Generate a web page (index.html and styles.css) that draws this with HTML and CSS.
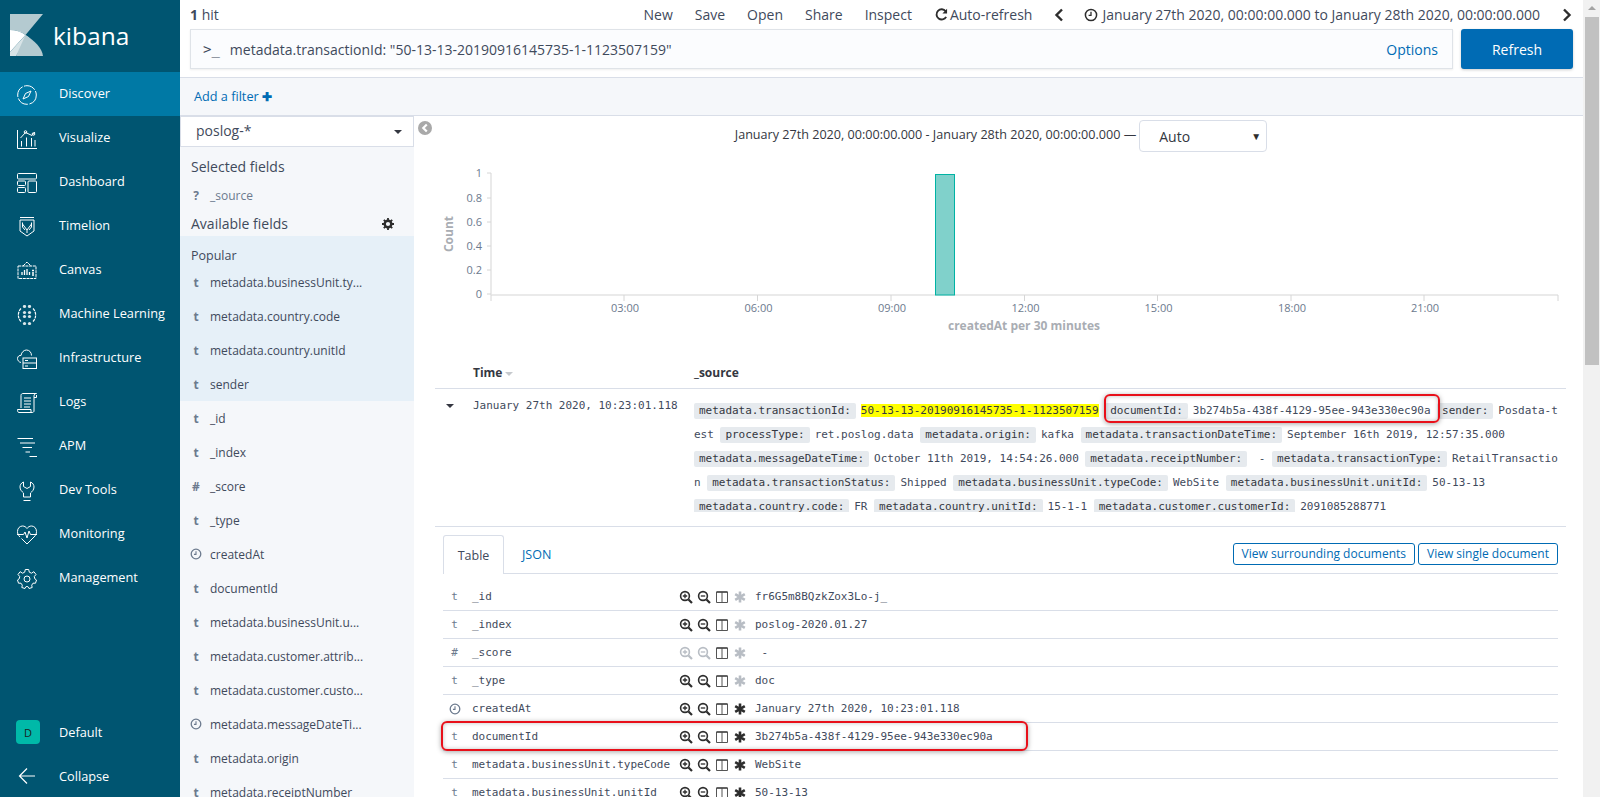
FILE: index.html
```html
<!DOCTYPE html>
<html lang="en">
<head>
<meta charset="utf-8">
<title>Discover - Kibana</title>
<link rel="stylesheet" href="styles.css">
</head>
<body>
<svg class="defs" width="0" height="0" aria-hidden="true">
  <symbol id="zin" viewBox="0 0 14 14"><circle cx="6" cy="6" r="4.4" fill="none" stroke="currentColor" stroke-width="1.6"/><path d="M9.5 9.5L13 13" stroke="currentColor" stroke-width="2.2"/><path d="M3.8 6h4.4M6 3.8v4.4" stroke="currentColor" stroke-width="1.3"/></symbol>
  <symbol id="zout" viewBox="0 0 14 14"><circle cx="6" cy="6" r="4.4" fill="none" stroke="currentColor" stroke-width="1.6"/><path d="M9.5 9.5L13 13" stroke="currentColor" stroke-width="2.2"/><path d="M3.8 6h4.4" stroke="currentColor" stroke-width="1.3"/></symbol>
  <symbol id="cols" viewBox="0 0 14 14"><path d="M1.5 2h11v10.5h-11zM7 2v10.5" fill="none" stroke="#555" stroke-width="1"/><path d="M1.5 2h11" stroke="#444" stroke-width="1.4"/></symbol>
  <symbol id="star" viewBox="0 0 14 14"><path d="M7 1.5v11M2.2 4.2l9.6 5.6M11.8 4.2L2.2 9.8" stroke="currentColor" stroke-width="2.6"/></symbol>
  <symbol id="clock" viewBox="0 0 14 14"><circle cx="7" cy="7" r="5.6" fill="none" stroke="currentColor" stroke-width="1.5"/><path d="M7 3.8V7.4H4.6" fill="none" stroke="currentColor" stroke-width="1.3"/></symbol>
</svg>
<div class="app">
  <aside class="nav">
    <div class="brand">
      <svg class="logo" viewBox="0 0 33 42" width="33" height="42"><path d="M0 0H33L15.500 21C11 17.800 6 16 0 16Z" fill="#b4cad0"/><path d="M0 16C6 16 11 17.800 15.500 21L0 38Z" fill="#fff"/><path d="M15.500 21L19 23.500L6 42H0V38Z" fill="#d8e4e7"/><path d="M15.500 21C25 27 32 34 33 42H6Z" fill="#b4cad0"/></svg>
      <span class="brand-name">kibana</span>
    </div>
    <a class="nav-item active"><svg class="ni" viewBox="0 0 20 20"><circle cx="10" cy="10" r="9.300" stroke-dasharray="12 1.500"/><path d="M14 6L11.500 11.500L6 14L8.500 8.500Z"/></svg><span>Discover</span></a>
    <a class="nav-item"><svg class="ni" viewBox="0 0 20 20"><path d="M.5 1V19.500H20M3.500 9L8.500 3.500L15 6.500L18 3"/><circle cx="8.500" cy="3" r="1.300"/><circle cx="16.500" cy="5" r="1.300"/><path d="M4.500 17.500V12M9.500 17.500V8.500M14.500 17.500V9M18 17.500V11"/></svg><span>Visualize</span></a>
    <a class="nav-item"><svg class="ni" viewBox="0 0 20 20"><rect x=".5" y=".5" width="19" height="5.500" rx="1"/><rect x=".5" y="8" width="8" height="4.500" rx="1"/><rect x=".5" y="14.500" width="8" height="5" rx="1"/><rect x="11" y="8" width="8.500" height="11.500" rx="1"/></svg><span>Dashboard</span></a>
    <a class="nav-item"><svg class="ni" viewBox="0 0 20 20"><path d="M3 .5H17M3 3H17V14L10 19L3 14ZM5.500 7L10 13L14.500 7M10 13V16M5.500 5.500V10L8 13M14.500 5.500V10L12 13"/></svg><span>Timelion</span></a>
    <a class="nav-item"><svg class="ni" viewBox="0 0 20 20"><path d="M6 5L10 1L14 5M1 5H19V17.500H1Z" stroke-dasharray="3 .7"/><path d="M5 14V11M7.500 14V9M10 14V8M12.500 14V11M15 9.500H17M15 12H17M15 14H17" stroke-width="1.300"/></svg><span>Canvas</span></a>
    <a class="nav-item"><svg class="ni" viewBox="0 0 20 20"><path d="M4 3.500C.5 7 .5 13 4 16.500M16 3.500C19.500 7 19.500 13 16 16.500" stroke-dasharray="3 .8" stroke-width="1.200"/><g class="solid"><circle cx="7.500" cy="1.500" r="1.600"/><circle cx="12.500" cy="1.500" r="1.600"/><circle cx="7.500" cy="7.500" r="1.600"/><circle cx="12.500" cy="7.500" r="1.600"/><circle cx="7.500" cy="11.500" r="1.600"/><circle cx="12.500" cy="11.500" r="1.600"/><circle cx="7.500" cy="18.500" r="1.600"/><circle cx="12.500" cy="18.500" r="1.600"/></g></svg><span>Machine Learning</span></a>
    <a class="nav-item"><svg class="ni" viewBox="0 0 20 20"><path d="M4 13.500C1.500 13 .5 11 .5 9.500C.5 7 3 6 4 6.500C4.500 3 7 1 9.500 1C12.500 1 14.500 3.500 14.500 6.500"/><rect x="6" y="9" width="13.500" height="10.500"/><path d="M6 14H19.500M8 11.500H11M8 17H11"/></svg><span>Infrastructure</span></a>
    <a class="nav-item"><svg class="ni" viewBox="0 0 20 20"><path d="M4 15V2.500C4 1 5 .5 6 .5H19.500C18 .5 17 1.500 17 3V18C17 19 16 19.500 15 19.500H2C.5 19.500.5 17.500.5 16.500H14V19"/><path d="M17 4.500H19.500V2M7 5H14M7 8H14M7 11H14M7 14H13" /></svg><span>Logs</span></a>
    <a class="nav-item"><svg class="ni" viewBox="0 0 20 20"><path d="M.5 1.500H16M3 6H18M5.500 10.500H15M8.500 15H13M12.500 19.500H20"/></svg><span>APM</span></a>
    <a class="nav-item"><svg class="ni" viewBox="0 0 20 20"><path d="M6.500 1C4 2 3 4 3 6C3 9 5 10.500 6.500 12V16H13.500V12C15 10.500 17 9 17 6C17 4 16 2 13.500 1V5.500L10 7.500L6.500 5.500ZM6.500 19.500H13.500"/></svg><span>Dev Tools</span></a>
    <a class="nav-item"><svg class="ni" viewBox="0 0 20 20"><path d="M3 12C1 10 .5 8.500 .5 6.500C.5 3 3 1 5.500 1C7.500 1 9 2 10 3.500C11 2 12.500 1 14.500 1C17 1 19.500 3 19.500 6.500C19.500 8.500 19 10 17 12L10 19L4.500 13.500"/><path d="M0 9.500H6.500L8 7L10 13L12 6L13.500 9.500H20"/></svg><span>Monitoring</span></a>
    <a class="nav-item"><svg class="ni" viewBox="0 0 20 20"><circle cx="10" cy="10" r="3"/><path d="M8.300 .5H11.700L12.300 3.200L14.500 4.200L16.900 2.700L19 5.500L17.300 7.500L17.800 9.800L19.500 11L18.500 14.200L16 14.200L14.700 16.200L15.200 18.500L12 19.500L10.800 17.500H9.200L8 19.500L4.800 18.500L5.300 16.200L4 14.200L1.500 14.200L.5 11L2.200 9.800L2.700 7.500L1 5.500L3.100 2.700L5.500 4.200L7.700 3.200Z"/></svg><span>Management</span></a>
    <div class="nav-bottom">
      <a class="nav-item space"><span class="avatar">D</span><span>Default</span></a>
      <a class="nav-item"><svg class="ni" viewBox="0 0 20 20"><path d="M3 10H18M10 2.500L2.500 10L10 17.500" stroke-width="1.200"/></svg><span>Collapse</span></a>
    </div>
  </aside>

  <main class="main">
    <header class="top">
      <div class="menu-row">
        <div class="hits"><b>1</b> hit</div>
        <nav class="menu">
          <a>New</a><a>Save</a><a>Open</a><a>Share</a><a>Inspect</a>
          <a class="refresh"><svg viewBox="0 0 14 14" width="13" height="13"><path d="M11.500 3.500A5.500 5.500 0 1 0 12 9.500" fill="none" stroke="currentColor" stroke-width="2"/><path d="M13 .8V6H8Z" fill="currentColor"/></svg>Auto-refresh</a>
          <a class="chev"><svg viewBox="0 0 10 14" width="10" height="14"><path d="M8 1.500L2.500 7L8 12.500" fill="none" stroke="currentColor" stroke-width="2.400"/></svg></a>
          <a class="range"><svg width="14" height="14"><use href="#clock"/></svg>January 27th 2020, 00:00:00.000 to January 28th 2020, 00:00:00.000</a>
          <a class="chev"><svg viewBox="0 0 10 14" width="10" height="14"><path d="M2 1.500L7.500 7L2 12.500" fill="none" stroke="currentColor" stroke-width="2.400"/></svg></a>
        </nav>
      </div>
      <div class="query-row">
        <div class="query"><span class="prompt">&gt;_</span><span class="qtext">metadata.transactionId: "50-13-13-20190916145735-1-1123507159"</span><a class="options">Options</a></div>
        <button class="refresh-btn">Refresh</button>
      </div>
    </header>
    <div class="filter-bar"><a class="add-filter">Add a filter <b>✚</b></a></div>
    <div class="content">
      <section class="fields">
        <div class="pattern"><span>poslog-*</span><i class="caret"></i></div>
        <h3 class="fhead">Selected fields</h3>
        <div class="field selected"><em>?</em><span>_source</span></div>
        <h3 class="fhead avail">Available fields <svg viewBox="0 0 12 12" width="12" height="12"><circle cx="6" cy="6" r="3.300" fill="none" stroke="#2d2d2d" stroke-width="2.400"/><path d="M6 0v2.500M6 9.500V12M0 6h2.500M9.500 6H12M1.800 1.800l1.800 1.800M8.400 8.400l1.800 1.800M1.800 10.200l1.800-1.800M8.400 3.600l1.800-1.800" stroke="#2d2d2d" stroke-width="1.800"/></svg></h3>
        <div class="popular">
          <div class="pop-title">Popular</div>
          <div class="field"><em>t</em><span>metadata.businessUnit.ty...</span></div>
          <div class="field"><em>t</em><span>metadata.country.code</span></div>
          <div class="field"><em>t</em><span>metadata.country.unitId</span></div>
          <div class="field"><em>t</em><span>sender</span></div>
        </div>
        <div class="field"><em>t</em><span>_id</span></div>
        <div class="field"><em>t</em><span>_index</span></div>
        <div class="field"><em>#</em><span>_score</span></div>
        <div class="field"><em>t</em><span>_type</span></div>
        <div class="field"><em><svg width="12" height="12"><use href="#clock"/></svg></em><span>createdAt</span></div>
        <div class="field"><em>t</em><span>documentId</span></div>
        <div class="field"><em>t</em><span>metadata.businessUnit.u...</span></div>
        <div class="field"><em>t</em><span>metadata.customer.attrib...</span></div>
        <div class="field"><em>t</em><span>metadata.customer.custo...</span></div>
        <div class="field"><em><svg width="12" height="12"><use href="#clock"/></svg></em><span>metadata.messageDateTi...</span></div>
        <div class="field"><em>t</em><span>metadata.origin</span></div>
        <div class="field"><em>t</em><span>metadata.receiptNumber</span></div>
      </section>
      <i class="collapse-btn"><svg viewBox="0 0 14 14" width="14" height="14"><circle cx="7" cy="7" r="7" fill="#a9a9a9"/><path d="M8.800 3.500L5.300 7L8.800 10.500" fill="none" stroke="#fff" stroke-width="2.200"/></svg></i>

      <section class="results">
        <div class="timespan"><span>January 27th 2020, 00:00:00.000 - January 28th 2020, 00:00:00.000 —</span><div class="interval">Auto<i class="tri">▼</i></div></div>
        <svg class="chart" viewBox="414 160 1169 190" width="1169" height="190">
          <path class="axis" d="M491 173V295M491 295H1558"/>
          <path class="tick" d="M487 173h4M487 198h4M487 222h4M487 246h4M487 270h4M487 294h4M491 295v6M624 295v6M757.500 295v6M891 295v6M1024.500 295v6M1157.500 295v6M1291 295v6M1424 295v6M1558 295v6"/>
          <rect x="935.500" y="174.500" width="19" height="120.500" fill="#80d1cb" stroke="#00b3a4"/>
          <g class="ylab"><text x="482" y="177">1</text><text x="482" y="202">0.8</text><text x="482" y="226">0.6</text><text x="482" y="250">0.4</text><text x="482" y="274">0.2</text><text x="482" y="298">0</text></g>
          <g class="xlab"><text x="625" y="312">03:00</text><text x="758.500" y="312">06:00</text><text x="892" y="312">09:00</text><text x="1025.500" y="312">12:00</text><text x="1158.500" y="312">15:00</text><text x="1292" y="312">18:00</text><text x="1425" y="312">21:00</text></g>
          <text class="atitle" x="1024" y="330">createdAt per 30 minutes</text>
          <text class="atitle" transform="translate(453 234) rotate(-90)">Count</text>
        </svg>
        <div class="doc-table">
          <div class="thead"><b class="th-time">Time<i class="sort"></i></b><b class="th-src">_source</b></div>
          <div class="drow">
            <i class="caret dark"></i>
            <div class="dtime">January 27th 2020, 10:23:01.118</div>
            <div class="source"><b>metadata.transactionId:</b><span><mark>50-13-13-20190916145735-1-1123507159</mark></span><b>documentId:</b><span>3b274b5a-438f-4129-95ee-943e330ec90a</span><b>sender:</b><span>Posdata-test</span><b>processType:</b><span>ret.poslog.data</span><b>metadata.origin:</b><span>kafka</span><b>metadata.transactionDateTime:</b><span>September 16th 2019, 12:57:35.000</span><b>metadata.messageDateTime:</b><span>October 11th 2019, 14:54:26.000</span><b>metadata.receiptNumber:</b><span>&nbsp;-</span><b>metadata.transactionType:</b><span>RetailTransaction</span><b>metadata.transactionStatus:</b><span>Shipped</span><b>metadata.businessUnit.typeCode:</b><span>WebSite</span><b>metadata.businessUnit.unitId:</b><span>50-13-13</span><b>metadata.country.code:</b><span>FR</span><b>metadata.country.unitId:</b><span>15-1-1</span><b>metadata.customer.customerId:</b><span>2091085288771</span></div>
          </div>
          <div class="detail">
            <div class="tabs">
              <a class="tab on">Table</a><a class="tab">JSON</a>
              <div class="views"><a>View surrounding documents</a><a>View single document</a></div>
            </div>
            <div class="kv-list">
              <div class="kv"><em>t</em><span class="k">_id</span><span class="acts"><svg><use href="#zin"/></svg><svg><use href="#zout"/></svg><svg><use href="#cols"/></svg><svg class="off"><use href="#star"/></svg></span><span>fr6G5m8BQzkZox3Lo-j_</span></div>
              <div class="kv"><em>t</em><span class="k">_index</span><span class="acts"><svg><use href="#zin"/></svg><svg><use href="#zout"/></svg><svg><use href="#cols"/></svg><svg class="off"><use href="#star"/></svg></span><span>poslog-2020.01.27</span></div>
              <div class="kv"><em>#</em><span class="k">_score</span><span class="acts"><svg class="off"><use href="#zin"/></svg><svg class="off"><use href="#zout"/></svg><svg><use href="#cols"/></svg><svg class="off"><use href="#star"/></svg></span><span>&nbsp;-</span></div>
              <div class="kv"><em>t</em><span class="k">_type</span><span class="acts"><svg><use href="#zin"/></svg><svg><use href="#zout"/></svg><svg><use href="#cols"/></svg><svg class="off"><use href="#star"/></svg></span><span>doc</span></div>
              <div class="kv"><em><svg width="12" height="12"><use href="#clock"/></svg></em><span class="k">createdAt</span><span class="acts"><svg><use href="#zin"/></svg><svg><use href="#zout"/></svg><svg><use href="#cols"/></svg><svg><use href="#star"/></svg></span><span>January 27th 2020, 10:23:01.118</span></div>
              <div class="kv"><em>t</em><span class="k">documentId</span><span class="acts"><svg><use href="#zin"/></svg><svg><use href="#zout"/></svg><svg><use href="#cols"/></svg><svg><use href="#star"/></svg></span><span>3b274b5a-438f-4129-95ee-943e330ec90a</span></div>
              <div class="kv"><em>t</em><span class="k">metadata.businessUnit.typeCode</span><span class="acts"><svg><use href="#zin"/></svg><svg><use href="#zout"/></svg><svg><use href="#cols"/></svg><svg><use href="#star"/></svg></span><span>WebSite</span></div>
              <div class="kv"><em>t</em><span class="k">metadata.businessUnit.unitId</span><span class="acts"><svg><use href="#zin"/></svg><svg><use href="#zout"/></svg><svg><use href="#cols"/></svg><svg><use href="#star"/></svg></span><span>50-13-13</span></div>
            </div>
          </div>
        </div>
      </section>
    </div>
  </main>
  <div class="scrollbar"><i class="up"></i><i class="thumb"></i></div>
  <div class="redbox box-a"></div>
  <div class="redbox box-b"></div>
</div>
</body>
</html>
```
FILE: styles.css
```css
* { box-sizing: border-box; }
html, body { margin: 0; height: 797px; overflow: hidden; }
body { font-family: "Open Sans", "Liberation Sans", sans-serif; font-size: 13px; color: #3f4a5c; background: #fff; }
a { color: inherit; text-decoration: none; }
.defs { position: absolute; }
.app { position: relative; display: flex; width: 1600px; height: 798px; overflow: hidden; }

/* left navigation */
.nav { width: 180px; flex: none; display: flex; flex-direction: column; background: #005571; color: #fff; }
.brand { height: 72px; display: flex; align-items: flex-start; padding: 14px 0 0 10px; }
.brand-name { font-size: 24.500px; line-height: 44px; margin-left: 10px; }
.nav-item { height: 44px; flex: none; display: flex; align-items: center; padding-left: 17px; gap: 22px; font-size: 12.750px; }
.nav-item > span:last-child { padding-bottom: 2px; }
.nav-item > .ni { margin-top: 2px; }
.nav-item.active { background: #0079a5; }
.ni { width: 20px; height: 20px; flex: none; fill: none; stroke: #fff; stroke-width: 1; }
.ni .solid { fill: #dbe7ea; stroke: none; }
.nav-bottom { margin-top: auto; }
.nav-bottom .nav-item > span:last-child { padding-bottom: 0; }
.nav-bottom .nav-item > .ni { margin-top: 0; }
.nav-item.space { padding-left: 16px; gap: 19px; }
.avatar { width: 24px; height: 24px; flex: none; border-radius: 4px; background: #00b9a8; color: #1a1c21; font-size: 11px; display: flex; align-items: center; justify-content: center; }

/* main column */
.main { width: 1403px; flex: none; display: flex; flex-direction: column; }
.top { height: 78px; border-bottom: 1px solid #d9dee8; padding: 0 10px; }
.menu-row { height: 29px; display: flex; align-items: center; justify-content: space-between; font-size: 14px; }
.hits b { font-weight: 700; }
.menu { display: flex; align-items: center; gap: 22px; margin-right: 1px; color: #3f4a5c; }
.refresh { display: flex; align-items: center; gap: 2px; margin-left: 1px; }
.refresh svg { color: #2d2d2d; }
.range { display: flex; align-items: center; gap: 4px; margin-left: -2px; }
.range svg { color: #2d2d2d; }
.chev { display: flex; color: #2d2d2d; }
.query-row { display: flex; gap: 8px; height: 40px; }
.query { flex: 1; display: flex; align-items: center; background: #fbfcfe; border: 1px solid #dfe3e8; box-shadow: 0 1px 2px rgba(0,0,0,.07); padding: 0 14px 0 12px; font-size: 14px; }
.prompt { font-family: "DejaVu Sans Mono", monospace; font-size: 14px; margin-right: 10px; }
.qtext { flex: 1; }
.options { color: #006bb4; font-size: 14px; }
.refresh-btn { width: 112px; border: 0; border-radius: 3px; background: #006bb4; color: #fff; font: 14px "Open Sans", sans-serif; box-shadow: 0 1px 3px rgba(0,0,0,.2); }
.filter-bar { height: 38px; background: #f5f7fa; border-bottom: 1px solid #d9dee8; display: flex; align-items: center; padding: 0 0 2px 14px; color: #006bb4; font-size: 12.700px; }
.add-filter b { font-size: 12px; }
.content { position: relative; flex: 1; display: flex; min-height: 0; }

/* field list */
.fields { width: 234px; flex: none; background: #f5f7fa; overflow: hidden; }
.pattern { height: 31px; background: #fff; border: 1px solid #d9dee8; display: flex; align-items: center; justify-content: space-between; padding: 0 11px 0 15px; font-size: 14px; }
.pattern span { padding-bottom: 2px; }
.caret { width: 0; height: 0; border: 4px solid transparent; border-top: 4.500px solid #343741; border-bottom: 0; }
.fhead { margin: 0; padding: 5px 0 0 11px; font-size: 14px; font-weight: 400; line-height: 29px; height: 40px; }
.avail { display: flex; align-items: center; justify-content: space-between; height: 25px; line-height: 25px; margin-top: 6px; padding: 0 20px 0 11px; }
.field { height: 34px; display: flex; align-items: center; padding-left: 5px; font-size: 12px; }
.field em { width: 22px; margin-right: 3px; flex: none; font-style: normal; font-weight: 700; color: #6c7a8e; font-size: 12px; display: flex; justify-content: center; }
.field.selected { height: 18px; padding-bottom: 2px; color: #6c7a8e; }
.popular { background: #e6f0f8; height: 165px; overflow: hidden; }
.pop-title { height: 29px; padding: 10px 0 0 11px; line-height: 20px; font-size: 12.500px; }
.collapse-btn { position: absolute; left: 238px; top: 5px; display: flex; }

/* results */
.results { flex: 1; min-width: 0; overflow: hidden; }
.timespan { height: 44px; padding: 4px 0 0 5px; display: flex; justify-content: center; align-items: flex-start; gap: 3px; font-size: 12.600px; color: #343741; }
.timespan span { line-height: 30px; }
.interval { position: relative; width: 128px; height: 32px; border: 1px solid #d9dee8; border-radius: 4px; padding-left: 19px; line-height: 32px; font-size: 14px; }
.tri { position: absolute; right: 5px; top: -1px; font-style: normal; font-size: 10px; color: #2d2d2d; }
.chart { display: block; }
.axis { fill: none; stroke: #e4e4e4; stroke-width: 1.500; }
.tick { fill: none; stroke: #d6d6d6; }
.ylab text { font-size: 11px; text-anchor: end; fill: #6c7a8e; }
.xlab text { font-size: 11px; text-anchor: middle; fill: #6c7a8e; }
.atitle { font-size: 12px; font-weight: 700; text-anchor: middle; fill: #a9adb3; }
.doc-table { margin: 0 17px 0 21px; font-family: "DejaVu Sans Mono", "Liberation Mono", monospace; font-size: 11px; letter-spacing: -.02px; color: #3f4a5c; }
.thead { height: 39px; padding-top: 6px; display: flex; align-items: center; border-bottom: 1px solid #d9dee8; font-family: "Open Sans", sans-serif; font-size: 12px; color: #343741; }
.th-time { width: 221px; margin-left: 38px; display: flex; align-items: center; gap: 3px; }
.sort { width: 0; height: 0; border: 4px solid transparent; border-top: 4px solid #c6c9cd; border-bottom: 0; margin-top: 3px; }
.drow { position: relative; height: 138px; padding: 8px 0 0 38px; display: flex; border-bottom: 1px solid #d9dee8; }
.caret.dark { position: absolute; left: 11px; top: 15px; }
.dtime { width: 221px; flex: none; line-height: 18px; }
.source { width: 866px; height: 115px; padding-top: 2px; overflow: hidden; line-height: 24px; word-break: break-all; }
.source b { display: inline-block; font-weight: 400; background: #e6eaee; border-radius: 2px; padding: 0 5px; margin-right: 5px; line-height: 16px; word-break: normal; color: #343741; }
.source span { margin-right: 6.600px; }
.source mark { background: #ff0; color: #343741; }

/* doc detail */
.detail { margin: 8px 8px 0 8px; }
.tabs { height: 39px; display: flex; align-items: flex-start; border-bottom: 1px solid #d9dee8; font-family: "Open Sans", sans-serif; font-size: 12.500px; letter-spacing: 0; }
.tab { height: 39px; padding: 0 18px; line-height: 40px; color: #006bb4; }
.tab.on { width: 61px; padding: 0; text-align: center; color: #3f4a5c; background: #fff; border: 1px solid #d9dee8; border-bottom: 0; border-radius: 3px 3px 0 0; }
.views { margin-left: auto; padding-top: 8px; display: flex; gap: 3px; color: #006bb4; font-size: 12px; }
.views a { height: 22px; padding: 0 8px; line-height: 20px; border: 1px solid #006bb4; border-radius: 3px; }
.kv-list { margin-top: 9px; }
.kv { height: 28px; display: flex; align-items: center; border-bottom: 1px solid #d9dee8; }
.kv em { width: 29px; flex: none; padding: 0 8px 0 2px; font-style: normal; color: #6c7a8e; display: flex; justify-content: center; }
.k { width: 207px; flex: none; }
.acts { width: 76px; flex: none; display: flex; gap: 4px; color: #2d2d2d; }
.acts svg { width: 14px; height: 14px; }
.acts svg.off { color: #b8bdc4; }

/* scrollbar + annotation boxes */
.scrollbar { flex: 1; display: flex; flex-direction: column; align-items: center; background: #f1f1f1; padding-top: 6px; }
.up { width: 0; height: 0; border: 4px solid transparent; border-bottom: 4px solid #a3a3a3; border-top: 0; }
.thumb { width: 14px; height: 348px; margin-top: 7px; background: #c1c1c1; }
.redbox { position: absolute; border: 2px solid #e8101a; border-radius: 6px; box-shadow: 0 1px 5px rgba(0,0,0,.35), inset 0 0 4px rgba(0,0,0,.25); pointer-events: none; }
.box-a { left: 1104px; top: 394px; width: 336px; height: 29px; }
.box-b { left: 441px; top: 721px; width: 587px; height: 30px; }
```
